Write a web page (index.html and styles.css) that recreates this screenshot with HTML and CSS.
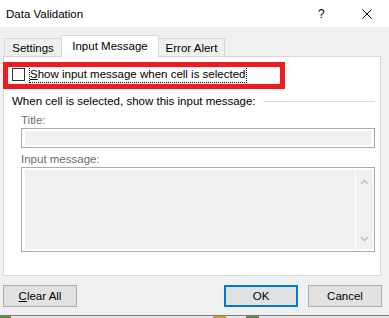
FILE: index.html
```html
<!DOCTYPE html>
<html>
<head>
<meta charset="utf-8">
<link rel="stylesheet" href="styles.css">
</head>
<body>
<div class="dialog">
  <div class="titlebar">
    <span class="title">Data Validation</span>
    <span class="help">?</span>
    <svg class="close" width="10" height="10" viewBox="0 0 10 10"><path d="M0.5 0.5 L9.5 9.5 M9.5 0.5 L0.5 9.5" stroke="#000" stroke-width="1" fill="none"/></svg>
  </div>
  <div class="tabs">
    <div class="tab first">Settings</div>
    <div class="tab active">Input Message</div>
    <div class="tab last">Error Alert</div>
  </div>
  <div class="panel">
    <div class="check-row">
      <span class="checkbox"></span>
      <span class="check-label"><u>S</u>how input message when cell is selected</span>
    </div>
    <div class="legend">
      <span>When cell is selected, show this input message:</span>
      <span class="legend-line"></span>
    </div>
    <div class="field-label">Title:</div>
    <div class="input"><div class="input-fill"></div></div>
    <div class="field-label">Input message:</div>
    <div class="textarea">
      <div class="input-fill"></div>
      <div class="scroll">
        <svg width="9" height="6" viewBox="0 0 9 6"><path d="M1 5 L4.5 1.5 L8 5" stroke="#c2c2c2" stroke-width="1.6" fill="none"/></svg>
        <svg width="9" height="6" viewBox="0 0 9 6"><path d="M1 1 L4.5 4.5 L8 1" stroke="#c2c2c2" stroke-width="1.6" fill="none"/></svg>
      </div>
    </div>
    <div class="highlight"></div>
  </div>
  <div class="buttons">
    <button class="btn"><u>C</u>lear All</button>
    <span class="spacer"></span>
    <button class="btn default">OK</button>
    <button class="btn">Cancel</button>
  </div>
  <div class="taskbar">
    <span class="chip green c1"></span>
    <span class="chip yellow c2"></span>
    <span class="chip green c3"></span>
  </div>
</div>
</body>
</html>
```
FILE: styles.css
```css
* { box-sizing: border-box; }
html, body { margin: 0; padding: 0; }
body {
  width: 389px;
  height: 318px;
  overflow: hidden;
  background: #f0f0f0;
  font-family: "Liberation Sans", Arial, sans-serif;
  font-size: 11.5px;
  color: #000;
}
.dialog { width: 389px; height: 318px; display: flex; flex-direction: column; }
.titlebar {
  height: 27px;
  background: #fff;
  display: flex;
  align-items: center;
  padding-left: 6px;
  flex-shrink: 0;
}
.title { flex: 1; font-size: 11.5px; }
.help { width: 7px; margin-right: 37px; font-size: 12px; }
.close { margin-right: 17px; flex-shrink: 0; }
.tabs {
  display: flex;
  align-items: flex-end;
  margin-top: 8px;
  padding-left: 4px;
  height: 22px;
  position: relative;
  z-index: 2;
  margin-bottom: -1px;
}
.tab {
  height: 18px;
  border: 1px solid #d9d9d9;
  border-bottom: none;
  background: #f0f0f0;
  display: flex;
  align-items: center;
  justify-content: center;
  padding: 0;
  margin-bottom: 1px;
  white-space: nowrap;
  flex-shrink: 0;
}
.tab.first { width: 57px; border-right: none; }
.tab.active {
  height: 22px;
  width: 98px;
  background: #fff;
  margin-bottom: 0;
  padding-bottom: 1px;
}
.tab.last { width: 66px; border-left: none; }
.panel {
  position: relative;
  margin: 0 8px 0 3px;
  height: 220px;
  background: #fff;
  border: 1px solid #d9d9d9;
  padding: 9px 5px 0 8px;
  flex-shrink: 0;
}
.check-row { display: flex; align-items: center; height: 17px; }
.checkbox {
  width: 13px; height: 13px;
  border: 1px solid #333;
  background: #fff;
  margin-right: 4px;
  flex-shrink: 0;
}
.check-label {
  border: 1px dotted #000;
  height: 17px;
  line-height: 15px;
  padding: 0 1px 0 0;
  white-space: nowrap;
}
.legend {
  display: flex;
  align-items: center;
  height: 16px;
  margin-top: 10px;
  white-space: nowrap;
}
.legend-line { flex: 1; height: 1px; background: #dcdcdc; margin-left: 7px; }
.field-label {
  color: #6d6d6d;
  height: 16px;
  line-height: 16px;
  margin-left: 9px;
  margin-top: 3px;
}
.input, .textarea {
  margin-left: 9px;
  border: 1px solid #a9a9a9;
  background: #fff;
  padding: 2px 3px 2px 3px;
  display: flex;
}
.input { height: 20px; margin-bottom: 2px; }
.textarea { height: 85px; padding-right: 1px; margin-top: 0; }
.input-fill { flex: 1; background: #f0f0f0; }
.scroll {
  width: 17px;
  margin-left: 1px;
  background: #f0f0f0;
  display: flex;
  flex-direction: column;
  justify-content: space-between;
  align-items: center;
  padding: 9px 0 7px;
}
.scroll svg { display: block; }
.highlight {
  position: absolute;
  left: -1px;
  top: 5px;
  width: 282px;
  height: 27px;
  border: 5px solid #ed1c24;
}
.buttons {
  display: flex;
  margin-top: 9px;
  padding-left: 3px;
  padding-right: 7px;
  height: 22px;
  flex-shrink: 0;
}
.spacer { flex: 1; }
.btn {
  width: 74px;
  height: 22px;
  margin: 0;
  padding: 0;
  background: #e1e1e1;
  border: 1px solid #adadad;
  font-family: inherit;
  font-size: 11.5px;
  color: #000;
}
.btn.default { border: 2px solid #0078d7; margin-right: 10px; }
.taskbar {
  margin-top: 8px;
  border-top: 1px solid #7a7a7a;
  height: 3px;
  position: relative;
  background: #e6e6e6;
  flex-shrink: 0;
}
.chip { position: absolute; top: 0; height: 2px; }
.green { background: #5c8a3c; }
.yellow { background: #c9a227; }
.c1 { left: 0; width: 11px; }
.c2 { left: 213px; width: 13px; }
.c3 { left: 246px; width: 13px; }
```
